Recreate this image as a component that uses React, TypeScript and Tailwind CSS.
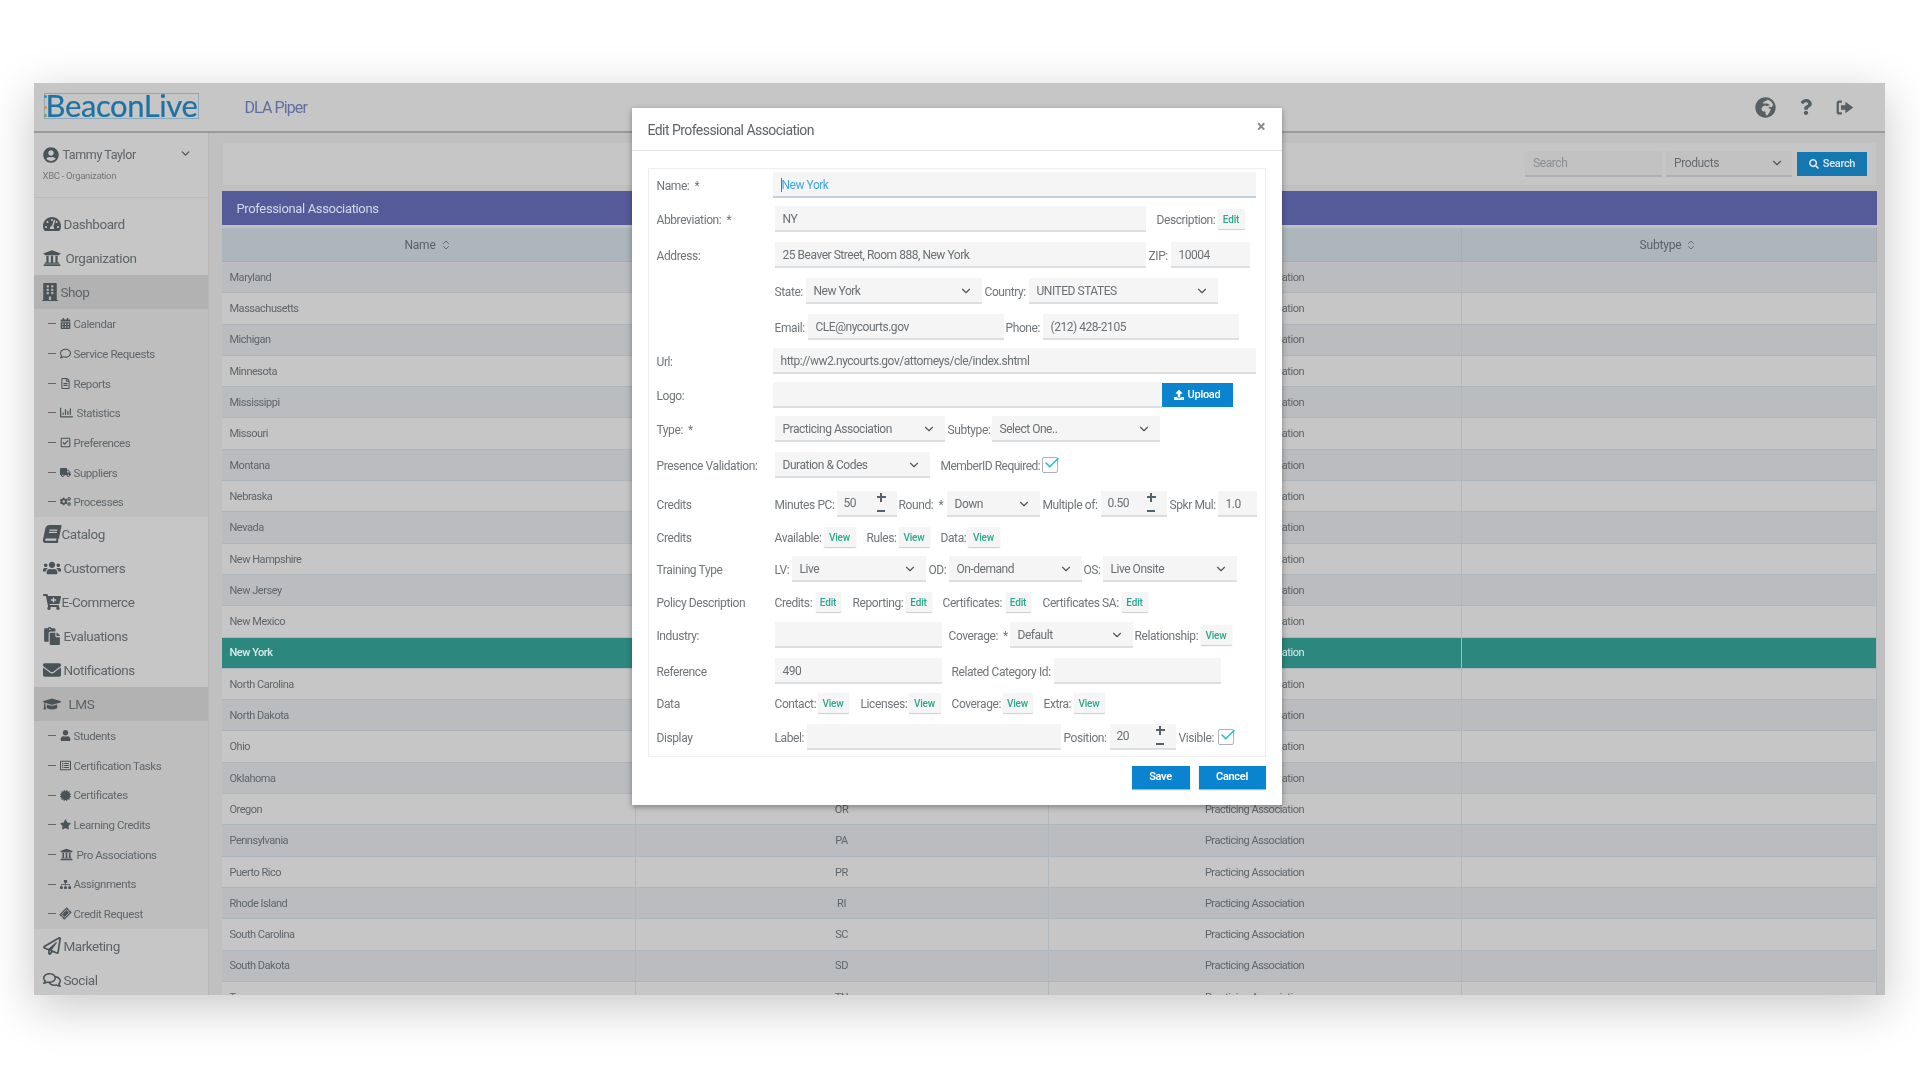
import type { ReactNode } from 'react';
import { ChevronDown, ChevronsUpDown, Check } from 'lucide-react';
import {
  FaTachometerAlt, FaUniversity, FaBuilding, FaCalendarAlt, FaRegComment, FaRegFileAlt, FaRegChartBar,
  FaRegCheckSquare, FaTruck, FaCogs, FaBook, FaUsers, FaCartPlus, FaPaste, FaEnvelope, FaGraduationCap,
  FaUser, FaRegListAlt, FaCertificate, FaStar, FaSitemap, FaTicketAlt, FaRegPaperPlane, FaRegComments,
  FaUserCircle, FaGlobeAfrica, FaQuestion, FaSearch, FaUpload,
} from 'react-icons/fa';

const states = [
  ['Maryland', 'MD'], ['Massachusetts', 'MA'], ['Michigan', 'MI'], ['Minnesota', 'MN'], ['Mississippi', 'MS'],
  ['Missouri', 'MO'], ['Montana', 'MT'], ['Nebraska', 'NE'], ['Nevada', 'NV'], ['New Hampshire', 'NH'],
  ['New Jersey', 'NJ'], ['New Mexico', 'NM'], ['New York', 'NY'], ['North Carolina', 'NC'], ['North Dakota', 'ND'],
  ['Ohio', 'OH'], ['Oklahoma', 'OK'], ['Oregon', 'OR'], ['Pennsylvania', 'PA'], ['Puerto Rico', 'PR'],
  ['Rhode Island', 'RI'], ['South Carolina', 'SC'], ['South Dakota', 'SD'], ['Tennessee', 'TN'],
];

function NavItem({ icon, label, active, gap }: { icon: ReactNode; label: string; active?: boolean; gap: string }) {
  return (
    <div className={`flex items-center h-[34px] pl-[9px] text-[13.5px] tracking-[-0.45px] text-[#5d6468] ${gap} ${active ? 'bg-[#b2b2b2]' : ''}`}>
      <span className="text-[#4a5358] text-[18px] flex">{icon}</span>
      <span className="pt-[1px]">{label}</span>
    </div>
  );
}

function SubItem({ icon, label, wide }: { icon: ReactNode; label: string; wide?: boolean }) {
  return (
    <div className="flex items-center h-[29.7px] pl-[14px] text-[11.5px] tracking-[-0.42px] text-[#60676b]">
      <span className="w-[8px] h-[1px] bg-[#666] mr-[4px]" />
      <span className={`${wide ? 'w-[16px] text-[13px]' : 'w-[13px] text-[11px]'} text-[#4a5358] flex mr-[1px]`}>{icon}</span>
      <span className="pt-[2px]">{label}</span>
    </div>
  );
}

function SortHead({ label }: { label: string }) {
  return (
    <div className="flex items-center justify-center gap-[4px] pt-[1px] border-r border-[#a3adb3] text-[12px] tracking-[-0.2px] text-[#5a6267]">
      {label}
      {label && <ChevronsUpDown size={12} strokeWidth={1.8} />}
    </div>
  );
}

function L({ w, children, className = '' }: { w: string; children?: ReactNode; className?: string }) {
  return <div className={`${w} ${className} shrink-0 pt-[1px] text-[12px] tracking-[-0.4px] text-[#6f7579] whitespace-nowrap`}>{children}</div>;
}

function F({ w, v, className = '' }: { w: string; v?: string; className?: string }) {
  return (
    <div className={`${w} ${className} shrink-0 h-[26px] bg-[#f5f5f5] border-b-2 border-[#dcdfe2] pl-[8px] pt-[1px] flex items-center text-[12px] tracking-[-0.47px] text-[#6a7074] whitespace-nowrap overflow-hidden`}>
      {v}
    </div>
  );
}

function S({ w, v, className = '' }: { w: string; v: string; className?: string }) {
  return (
    <div className={`${w} ${className} shrink-0 h-[26px] bg-[#f5f5f5] border-b-2 border-[#dcdfe2] pl-[8px] pr-[9px] pt-[1px] flex items-center justify-between text-[12px] tracking-[-0.47px] text-[#6a7074] whitespace-nowrap`}>
      {v}
      <ChevronDown size={14} strokeWidth={2} className="text-[#555]" />
    </div>
  );
}

function N({ w, v }: { w: string; v: string }) {
  return (
    <div className={`${w} shrink-0 h-[26px] bg-[#f5f5f5] border-b-2 border-[#dcdfe2] pl-[7px] pr-[11px] flex items-center justify-between text-[12px] tracking-[-0.47px] text-[#6a7074]`}>
      {v}
      <div className="flex flex-col items-center gap-[8px] -mt-[2px]">
        <span className="relative block w-[9px] h-[9px]">
          <span className="absolute left-0 top-[3.5px] w-[9px] h-[2px] bg-[#56636b]" />
          <span className="absolute left-[3.5px] top-0 w-[2px] h-[9px] bg-[#56636b]" />
        </span>
        <span className="block w-[8px] h-[2px] bg-[#56636b]" />
      </div>
    </div>
  );
}

function B({ w, label }: { w: string; label: string }) {
  return (
    <div className={`${w} shrink-0 h-[20px] bg-[#f5f5f5] shadow-[0_1px_1px_rgba(0,0,0,0.2)] rounded-[1px] flex items-center justify-center text-[10px] tracking-[-0.2px] font-medium text-[#2ba78f]`}>
      {label}
    </div>
  );
}

function Cb() {
  return (
    <div className="relative shrink-0 w-[16px] h-[16px] border border-[#a9b3b8] rounded-[2px]">
      <Check size={18} strokeWidth={2} className="absolute left-[0px] top-[-4px] text-[#27b9d3]" />
    </div>
  );
}

function Row({ mt, children }: { mt: string; children: ReactNode }) {
  return <div className={`${mt} flex items-center h-[26px]`}>{children}</div>;
}

function Modal() {
  return (
    <div className="absolute left-[598px] top-[25px] w-[650px] bg-white shadow-[0_2px_6px_rgba(0,0,0,0.35)]">
      <div className="flex items-center justify-between h-[43px] border-b border-[#e2e4e6] pl-[16px] pr-[16px]">
        <div className="pt-[2px] text-[14px] tracking-[-0.55px] text-[#5e6468]">Edit Professional Association</div>
        <div className="text-[16px] font-bold text-[#888] -mt-[5px]">×</div>
      </div>
      <div className="mx-[16px] mt-[17px] h-[589px] border border-[#eceeef] pl-[8px] pt-[3px]">
        <Row mt="mt-0">
          <L w="w-[116px]">Name: &nbsp;*</L>
          <div className="w-[483px] h-[26px] bg-[#f5f5f5] border-b-2 border-[#c3d0df] pl-[8px] pt-[1px] flex items-center text-[12px] tracking-[-0.47px] text-[#3ea6e6]">
            <span className="w-[1px] h-[14px] bg-[#2f7fd0]" />New York
          </div>
        </Row>
        <Row mt="mt-[8px]">
          <L w="w-[118px]">Abbreviation: &nbsp;*</L>
          <F w="w-[371px]" v="NY" />
          <L w="w-[61px]" className="ml-[11px]">Description:</L>
          <B w="w-[27px]" label="Edit" />
        </Row>
        <Row mt="mt-[10px]">
          <L w="w-[118px]">Address:</L>
          <F w="w-[371px]" v="25 Beaver Street, Room 888, New York" />
          <L w="w-[22px]" className="ml-[3px]">ZIP:</L>
          <F w="w-[79px]" v="10004" />
        </Row>
        <Row mt="mt-[10px]">
          <L w="w-[118px]" />
          <L w="w-[31px]">State:</L>
          <S w="w-[176px]" v="New York" />
          <L w="w-[44px]" className="ml-[3px]">Country:</L>
          <S w="w-[189px]" v="UNITED STATES" />
        </Row>
        <Row mt="mt-[10px]">
          <L w="w-[118px]" />
          <L w="w-[33px]">Email:</L>
          <F w="w-[196px]" v="CLE@nycourts.gov" />
          <L w="w-[37px]" className="ml-[2px]">Phone:</L>
          <F w="w-[196px]" v="(212) 428-2105" />
        </Row>
        <Row mt="mt-[8px]">
          <L w="w-[116px]">Url:</L>
          <F w="w-[483px]" v="http://ww2.nycourts.gov/attorneys/cle/index.shtml" />
        </Row>
        <Row mt="mt-[8px]">
          <L w="w-[116px]">Logo:</L>
          <F w="w-[389px]" />
          <div className="w-[71px] h-[24px] bg-[#0b84cf] flex items-center justify-center gap-[4px] text-[11px] font-medium tracking-[-0.3px] text-white">
            <FaUpload size={10} />Upload
          </div>
        </Row>
        <Row mt="mt-[8px]">
          <L w="w-[118px]">Type: &nbsp;*</L>
          <S w="w-[170px]" v="Practicing Association" />
          <L w="w-[44px]" className="ml-[3px]">Subtype:</L>
          <S w="w-[168px]" v="Select One.." />
        </Row>
        <Row mt="mt-[10px]">
          <L w="w-[118px]">Presence Validation:</L>
          <S w="w-[155px]" v="Duration & Codes" />
          <L w="w-[101px]" className="ml-[11px] tracking-[-0.5px]">MemberID Required:</L>
          <Cb />
        </Row>
        <Row mt="mt-[13px]">
          <L w="w-[118px]">Credits</L>
          <L w="w-[62px]">Minutes PC:</L>
          <N w="w-[60px]" v="50" />
          <L w="w-[48px]" className="ml-[2px]">Round: &nbsp;*</L>
          <S w="w-[93px]" v="Down" />
          <L w="w-[58px]" className="ml-[3px]">Multiple of:</L>
          <N w="w-[66px]" v="0.50" />
          <L w="w-[48px]" className="ml-[3px]">Spkr Mul:</L>
          <F w="w-[39px]" v="1.0" />
        </Row>
        <Row mt="mt-[7px]">
          <L w="w-[118px]">Credits</L>
          <L w="w-[49px]">Available:</L>
          <B w="w-[32px]" label="View" />
          <L w="w-[32px]" className="ml-[11px]">Rules:</L>
          <B w="w-[31px]" label="View" />
          <L w="w-[27px]" className="ml-[11px]">Data:</L>
          <B w="w-[32px]" label="View" />
        </Row>
        <Row mt="mt-[6px]">
          <L w="w-[118px]">Training Type</L>
          <L w="w-[17px]">LV:</L>
          <S w="w-[134px]" v="Live" />
          <L w="w-[20px]" className="ml-[3px]">OD:</L>
          <S w="w-[133px]" v="On-demand" />
          <L w="w-[19px]" className="ml-[2px]">OS:</L>
          <S w="w-[134px]" v="Live Onsite" />
        </Row>
        <Row mt="mt-[7px]">
          <L w="w-[118px]">Policy Description</L>
          <L w="w-[41px]">Credits:</L>
          <B w="w-[25px]" label="Edit" />
          <L w="w-[53px]" className="ml-[12px]">Reporting:</L>
          <B w="w-[26px]" label="Edit" />
          <L w="w-[63px]" className="ml-[11px]">Certificates:</L>
          <B w="w-[25px]" label="Edit" />
          <L w="w-[79px]" className="ml-[12px]">Certificates SA:</L>
          <B w="w-[26px]" label="Edit" />
        </Row>
        <Row mt="mt-[7px]">
          <L w="w-[118px]">Industry:</L>
          <F w="w-[167px]" />
          <L w="w-[61px]" className="ml-[7px]">Coverage: &nbsp;*</L>
          <S w="w-[123px]" v="Default" />
          <L w="w-[66px]" className="ml-[2px]">Relationship:</L>
          <B w="w-[31px]" label="View" />
        </Row>
        <Row mt="mt-[10px]">
          <L w="w-[118px]">Reference</L>
          <F w="w-[167px]" v="490" />
          <L w="w-[102px]" className="ml-[10px]">Related Category Id:</L>
          <F w="w-[167px]" />
        </Row>
        <Row mt="mt-[6px]">
          <L w="w-[118px]">Data</L>
          <L w="w-[43px]">Contact:</L>
          <B w="w-[31px]" label="View" />
          <L w="w-[48px]" className="ml-[12px]">Licenses:</L>
          <B w="w-[32px]" label="View" />
          <L w="w-[51px]" className="ml-[11px]">Coverage:</L>
          <B w="w-[30px]" label="View" />
          <L w="w-[30px]" className="ml-[11px]">Extra:</L>
          <B w="w-[31px]" label="View" />
        </Row>
        <Row mt="mt-[8px]">
          <L w="w-[118px]">Display</L>
          <L w="w-[32px]">Label:</L>
          <F w="w-[254px]" />
          <L w="w-[46px]" className="ml-[3px]">Position:</L>
          <N w="w-[66px]" v="20" />
          <L w="w-[39px]" className="ml-[3px]">Visible:</L>
          <Cb />
        </Row>
      </div>
      <div className="flex justify-end gap-[9px] pt-[9px] pb-[16px] pr-[16px]">
        <div className="w-[58px] h-[23px] bg-[#0b84cf] flex items-center justify-center text-[11px] font-semibold tracking-[-0.3px] text-white shadow-[0_1px_1px_rgba(0,0,0,0.3)]">Save</div>
        <div className="w-[67px] h-[23px] bg-[#0b84cf] flex items-center justify-center text-[11px] font-semibold tracking-[-0.3px] text-white shadow-[0_1px_1px_rgba(0,0,0,0.3)]">Cancel</div>
      </div>
    </div>
  );
}

export default function App() {
  return (
    <div className="h-[1080px] bg-white pt-[83px] pl-[33.5px] font-['Roboto',sans-serif] blur-[0.5px] overflow-hidden">
      <div className="relative w-[1851.5px] h-[912px] bg-[#c0c0c0] overflow-hidden flex flex-col shadow-[0_12px_45px_rgba(0,0,0,0.22)]">
        <div className="h-[50px] shrink-0 bg-[#c6c6c6] border-b-2 border-[#9a9a9a] flex items-center">
          <div className="relative ml-[10px] w-[155px] h-[26px] border border-[#8ca9bb] -mt-[3px] flex items-center pl-[1px]">
            <span className="text-[31px] leading-none text-[#1d72a3] tracking-[-0.4px] font-['Lato',sans-serif] [-webkit-text-stroke:0.2px_#1d72a3]">BeaconLive</span>
            <span className="absolute left-[-1px] top-[1px] w-[3px] h-[3px] rounded-full bg-[#2b8db8]" />
            <span className="absolute left-[-1px] top-[12px] w-[3px] h-[3px] rounded-full bg-[#d98a3c]" />
            <span className="absolute left-[-1px] top-[20px] w-[3px] h-[3px] rounded-full bg-[#6aa84f]" />
          </div>
          <div className="ml-[46px] pt-[1px] text-[16px] tracking-[-0.9px] text-[#5f6f9f]">DLA Piper</div>
          <div className="ml-auto mr-[30px] flex items-center text-[#565f64]">
            <FaGlobeAfrica size={21} />
            <FaQuestion size={16} className="ml-[22px]" />
            <svg viewBox="0 0 24 24" className="ml-[20px] w-[21px] h-[21px]" fill="currentColor">
              <path d="M9 4H6a3 3 0 0 0-3 3v10a3 3 0 0 0 3 3h3v-2.5H6.5a1 1 0 0 1-1-1v-9a1 1 0 0 1 1-1H9z" />
              <path d="M13 5.5l9 6.5-9 6.5v-4H8v-5h5z" />
            </svg>
          </div>
        </div>

        <div className="flex flex-1 min-h-0">
          <div className="w-[175px] shrink-0 bg-[#c6c6c6] border-r border-[#b6b6b6]">
            <div className="h-[65px] border-b border-[#bbbbbb] pl-[9px] pr-[16px] pt-[13px]">
              <div className="flex items-center text-[12.5px] tracking-[-0.4px] text-[#5d6468]">
                <FaUserCircle size={16} className="text-[#4a5358] mr-[4px]" />
                Tammy Taylor
                <ChevronDown size={13} strokeWidth={2.5} className="ml-auto text-[#555] -mt-[4px]" />
              </div>
              <div className="mt-[4px] text-[9.5px] tracking-[-0.3px] text-[#777]">XBC - Organization</div>
            </div>
            <div className="pt-[9px]">
              <NavItem icon={<FaTachometerAlt />} label="Dashboard" gap="gap-[3px]" />
              <NavItem icon={<FaUniversity />} label="Organization" gap="gap-[5px]" />
              <NavItem icon={<FaBuilding className="-ml-[2px]" />} label="Shop" active gap="gap-[2px]" />
              <div className="bg-[#bebebe]">
                <SubItem icon={<FaCalendarAlt />} label="Calendar" />
                <SubItem icon={<FaRegComment />} label="Service Requests" />
                <SubItem icon={<FaRegFileAlt />} label="Reports" />
                <SubItem icon={<FaRegChartBar />} label="Statistics" wide />
                <SubItem icon={<FaRegCheckSquare />} label="Preferences" />
                <SubItem icon={<FaTruck />} label="Suppliers" />
                <SubItem icon={<FaCogs />} label="Processes" />
              </div>
              <NavItem icon={<FaBook className="-skew-x-12" />} label="Catalog" gap="gap-[1px]" />
              <NavItem icon={<FaUsers />} label="Customers" gap="gap-[3px]" />
              <NavItem icon={<FaCartPlus />} label="E-Commerce" gap="gap-[1px]" />
              <NavItem icon={<FaPaste />} label="Evaluations" gap="gap-[3px]" />
              <NavItem icon={<FaEnvelope />} label="Notifications" gap="gap-[3px]" />
              <NavItem icon={<FaGraduationCap />} label="LMS" active gap="gap-[8px]" />
              <div className="bg-[#bebebe]">
                <SubItem icon={<FaUser />} label="Students" />
                <SubItem icon={<FaRegListAlt />} label="Certification Tasks" />
                <SubItem icon={<FaCertificate />} label="Certificates" />
                <SubItem icon={<FaStar />} label="Learning Credits" />
                <SubItem icon={<FaUniversity />} label="Pro Associations" wide />
                <SubItem icon={<FaSitemap />} label="Assignments" />
                <SubItem icon={<FaTicketAlt className="-rotate-45" />} label="Credit Request" />
              </div>
              <NavItem icon={<FaRegPaperPlane />} label="Marketing" gap="gap-[3px]" />
              <NavItem icon={<FaRegComments />} label="Social" gap="gap-[3px]" />
            </div>
          </div>

          <div className="flex-1 min-w-0 pl-[13px] pr-[8px] pt-[9px]">
            <div className="h-[44px] bg-[#c6c6c6] border border-[#c0c0c0] flex items-center justify-end pr-[9px]">
              <div className="w-[137px] h-[26px] bg-[#c2c2c2] border-b-2 border-[#b0b0b0] pl-[8px] flex items-center text-[12px] tracking-[-0.4px] text-[#8a8f92]">Search</div>
              <div className="ml-[4px] w-[126px] h-[26px] bg-[#c2c2c2] border-b-2 border-[#b0b0b0] pl-[8px] pr-[8px] flex items-center justify-between text-[12px] tracking-[-0.4px] text-[#666c70]">
                Products
                <ChevronDown size={14} strokeWidth={2} className="text-[#555]" />
              </div>
              <div className="ml-[5px] w-[70px] h-[24px] bg-[#1577b0] flex items-center justify-center gap-[4px] text-[11px] font-medium tracking-[-0.3px] text-[#dfe8ee]">
                <FaSearch size={10} />Search
              </div>
            </div>
            <div className="mt-[5px] h-[34px] bg-[#555b99] pl-[15px] pt-[1px] flex items-center text-[13px] tracking-[-0.35px] text-[#d4d7e8]">Professional Associations</div>
            <div className="mt-[3px] h-[34px] grid grid-cols-[414px_413px_413px_415px] bg-[#adb6bc] border-b border-[#a3adb3]">
              <SortHead label="Name" />
              <SortHead label="" />
              <SortHead label="" />
              <SortHead label="Subtype" />
            </div>
            {states.map(([name, abbr], i) => {
              const selected = name === 'New York';
              const rowBg = selected ? 'bg-[#2c887f] text-[#d8ebe8]' : i % 2 === 0 ? 'bg-[#bbbcc0] text-[#5f666b]' : 'bg-[#c6c6c6] text-[#5f666b]';
              return (
                <div key={name} className={`grid grid-cols-[414px_413px_413px_415px] h-[31.3px] border-b border-[#adb6bc] text-[11px] tracking-[-0.48px] ${rowBg}`}>
                  <div className={`flex items-center pl-[8px] pt-[2px] border-r border-[#b0b8bd] ${selected ? 'font-medium' : ''}`}>{name}</div>
                  <div className="flex items-center justify-center pt-[2px] border-r border-[#b0b8bd]">{abbr}</div>
                  <div className="flex items-center justify-center pt-[2px] border-r border-[#b0b8bd]">Practicing Association</div>
                  <div className="border-r border-[#b0b8bd]" />
                </div>
              );
            })}
          </div>
        </div>

        <Modal />
      </div>
    </div>
  );
}
